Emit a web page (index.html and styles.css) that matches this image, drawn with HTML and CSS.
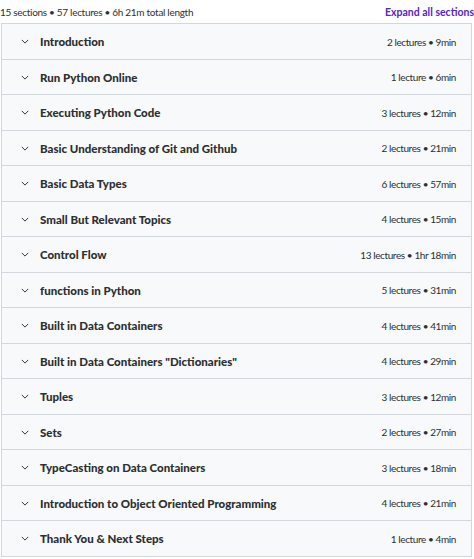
FILE: index.html
```html
<!DOCTYPE html>
<html>
<head>
<meta charset="utf-8">
<link rel="stylesheet" href="styles.css">
</head>
<body>
<div class="curriculum">
  <div class="summary">
    <span class="stats">15 sections • 57 lectures • 6h 21m total length</span>
    <button class="expand">Expand all sections</button>
  </div>
  <div class="sections">
    <div class="section"><span class="chev"><svg viewBox="0 0 10 6" width="8" height="5"><path d="M1 1l4 4 4-4" fill="none" stroke="#2d2f31" stroke-width="1.2"/></svg></span><span class="title">Introduction</span><span class="meta">2 lectures • 9min</span></div>
    <div class="section"><span class="chev"><svg viewBox="0 0 10 6" width="8" height="5"><path d="M1 1l4 4 4-4" fill="none" stroke="#2d2f31" stroke-width="1.2"/></svg></span><span class="title">Run Python Online</span><span class="meta">1 lecture • 6min</span></div>
    <div class="section"><span class="chev"><svg viewBox="0 0 10 6" width="8" height="5"><path d="M1 1l4 4 4-4" fill="none" stroke="#2d2f31" stroke-width="1.2"/></svg></span><span class="title">Executing Python Code</span><span class="meta">3 lectures • 12min</span></div>
    <div class="section"><span class="chev"><svg viewBox="0 0 10 6" width="8" height="5"><path d="M1 1l4 4 4-4" fill="none" stroke="#2d2f31" stroke-width="1.2"/></svg></span><span class="title">Basic Understanding of Git and Github</span><span class="meta">2 lectures • 21min</span></div>
    <div class="section"><span class="chev"><svg viewBox="0 0 10 6" width="8" height="5"><path d="M1 1l4 4 4-4" fill="none" stroke="#2d2f31" stroke-width="1.2"/></svg></span><span class="title">Basic Data Types</span><span class="meta">6 lectures • 57min</span></div>
    <div class="section"><span class="chev"><svg viewBox="0 0 10 6" width="8" height="5"><path d="M1 1l4 4 4-4" fill="none" stroke="#2d2f31" stroke-width="1.2"/></svg></span><span class="title">Small But Relevant Topics</span><span class="meta">4 lectures • 15min</span></div>
    <div class="section"><span class="chev"><svg viewBox="0 0 10 6" width="8" height="5"><path d="M1 1l4 4 4-4" fill="none" stroke="#2d2f31" stroke-width="1.2"/></svg></span><span class="title">Control Flow</span><span class="meta">13 lectures • 1hr 18min</span></div>
    <div class="section"><span class="chev"><svg viewBox="0 0 10 6" width="8" height="5"><path d="M1 1l4 4 4-4" fill="none" stroke="#2d2f31" stroke-width="1.2"/></svg></span><span class="title">functions in Python</span><span class="meta">5 lectures • 31min</span></div>
    <div class="section"><span class="chev"><svg viewBox="0 0 10 6" width="8" height="5"><path d="M1 1l4 4 4-4" fill="none" stroke="#2d2f31" stroke-width="1.2"/></svg></span><span class="title">Built in Data Containers</span><span class="meta">4 lectures • 41min</span></div>
    <div class="section"><span class="chev"><svg viewBox="0 0 10 6" width="8" height="5"><path d="M1 1l4 4 4-4" fill="none" stroke="#2d2f31" stroke-width="1.2"/></svg></span><span class="title">Built in Data Containers "Dictionaries"</span><span class="meta">4 lectures • 29min</span></div>
    <div class="section"><span class="chev"><svg viewBox="0 0 10 6" width="8" height="5"><path d="M1 1l4 4 4-4" fill="none" stroke="#2d2f31" stroke-width="1.2"/></svg></span><span class="title">Tuples</span><span class="meta">3 lectures • 12min</span></div>
    <div class="section"><span class="chev"><svg viewBox="0 0 10 6" width="8" height="5"><path d="M1 1l4 4 4-4" fill="none" stroke="#2d2f31" stroke-width="1.2"/></svg></span><span class="title">Sets</span><span class="meta">2 lectures • 27min</span></div>
    <div class="section"><span class="chev"><svg viewBox="0 0 10 6" width="8" height="5"><path d="M1 1l4 4 4-4" fill="none" stroke="#2d2f31" stroke-width="1.2"/></svg></span><span class="title">TypeCasting on Data Containers</span><span class="meta">3 lectures • 18min</span></div>
    <div class="section"><span class="chev"><svg viewBox="0 0 10 6" width="8" height="5"><path d="M1 1l4 4 4-4" fill="none" stroke="#2d2f31" stroke-width="1.2"/></svg></span><span class="title">Introduction to Object Oriented Programming</span><span class="meta">4 lectures • 21min</span></div>
    <div class="section"><span class="chev"><svg viewBox="0 0 10 6" width="8" height="5"><path d="M1 1l4 4 4-4" fill="none" stroke="#2d2f31" stroke-width="1.2"/></svg></span><span class="title">Thank You &amp; Next Steps</span><span class="meta">1 lecture • 4min</span></div>
  </div>
</div>
</body>
</html>
```
FILE: styles.css
```css
html, body {
  margin: 0;
  padding: 0;
  background: #ffffff;
}
body {
  font-family: "Lato", "Liberation Sans", sans-serif;
  color: #2d2f31;
}
.curriculum {
  width: 471px;
  margin-left: 1px;
}
.summary {
  height: 23px;
  display: flex;
  align-items: center;
  justify-content: space-between;
}
.stats {
  font-size: 10px;
  letter-spacing: -0.3px;
  color: #2d2f31;
  margin-left: -1px;
}
.expand {
  border: 0;
  background: none;
  padding: 0;
  font-family: inherit;
  font-size: 10.5px;
  font-weight: 700;
  color: #5624d0;
  margin-right: -2px;
}
.sections {
  border: 1px solid #d1d7dc;
  border-bottom: 0;
}
.section {
  height: 33.5px;
  display: flex;
  align-items: center;
  background: #f7f9fa;
  border-bottom: 1px solid #d1d7dc;
  padding: 1px 15px 0 19px;
  box-sizing: content-box;
}
.chev {
  width: 19px;
  display: flex;
  align-items: center;
}
.chev svg {
  display: block;
}
.title {
  flex: 1;
  font-size: 11.5px;
  font-weight: 900;
  color: #2d2f31;
}
.meta {
  font-size: 10px;
  letter-spacing: -0.4px;
  color: #2d2f31;
}
```
